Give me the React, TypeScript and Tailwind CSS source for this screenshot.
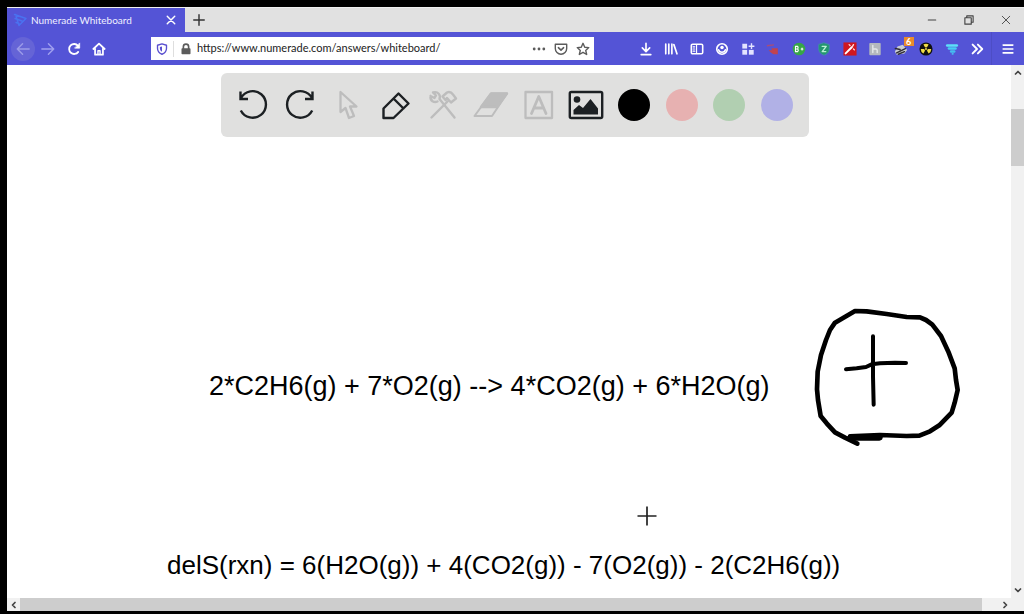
import React from 'react';

type IconProps = { children: React.ReactNode; className?: string; box?: string };

function Icon({ children, className = 'size-4', box = '0 0 16 16' }: IconProps) {
  return (
    <svg
      viewBox={box}
      className={className}
      fill="none"
      stroke="currentColor"
      strokeWidth="1.6"
      strokeLinecap="round"
      strokeLinejoin="round"
      aria-hidden="true"
    >
      {children}
    </svg>
  );
}

type ButtonProps = { label: string; className?: string; children: React.ReactNode };

function IconButton({ label, className = '', children }: ButtonProps) {
  return (
    <button type="button" aria-label={label} className={`flex items-center justify-center ${className}`}>
      {children}
    </button>
  );
}

function TabStrip() {
  return (
    <div className="flex h-[25px] shrink-0 border-t border-[#f0f0f0] bg-[#e1e1e1]">
      <div className="flex w-[178px] items-center bg-[#5454d6] pr-2 pl-1.5 text-[#f0f0ff]">
        <Icon className="size-4 text-[#4a72f0]">
          <path d="M1.5 2.5 L13 6.5 M2 6.5 L9 9 M3 10.5 L6 11.5 M2.5 2.5 L6 13.5 L13 6.5" strokeWidth="1.4" />
        </Icon>
        <span className="ml-0.5 flex-1 text-[10px]">Numerade Whiteboard</span>
        <IconButton label="Close tab" className="size-3 text-white">
          <Icon className="size-3">
            <path d="M3 3 L13 13 M13 3 L3 13" strokeWidth="1.9" />
          </Icon>
        </IconButton>
      </div>
      <IconButton label="New tab" className="w-[27px] text-[#333]">
        <Icon className="size-3">
          <path d="M8 1 V15 M1 8 H15" strokeWidth="1.9" />
        </Icon>
      </IconButton>
      <div className="ml-auto flex text-[#444]">
        <IconButton label="Minimize" className="w-[37px]">
          <Icon className="size-3"><path d="M3 8 H13" strokeWidth="1.4" /></Icon>
        </IconButton>
        <IconButton label="Restore" className="w-[37px]">
          <Icon className="size-3">
            <path d="M2.5 5 H11 V13.500 H2.500 Z M5 5 V2.500 H13.500 V11 H11" strokeWidth="1.5" />
          </Icon>
        </IconButton>
        <IconButton label="Close window" className="w-[37px]">
          <Icon className="size-3"><path d="M3 3 L13 13 M13 3 L3 13" strokeWidth="1.2" /></Icon>
        </IconButton>
      </div>
    </div>
  );
}

function AddressBar() {
  return (
    <div className="ml-10 flex h-[23px] w-[443px] items-center bg-white text-[#5b5b5b]">
      <IconButton label="Tracking protection" className="w-[22px] text-[#5a50cf]">
        <Icon className="size-3">
          <path d="M8 1.2 L14 3 V7 C14 11.2 11.5 13.6 8 15 C4.5 13.6 2 11.2 2 7 V3 Z" strokeWidth="1.8" />
          <path d="M8 4.5 V11.5 C6 10.5 5.2 9 5.2 7 V5.2 Z" fill="currentColor" stroke="none" />
        </Icon>
      </IconButton>
      <span className="h-4 w-px bg-[#dedede]" />
      <IconButton label="Site information" className="w-[23px]">
        <Icon className="size-3">
          <path d="M4.5 8 V5 A3.5 3.5 0 0 1 11.5 5 V8" strokeWidth="2.2" />
          <rect x="2" y="7" width="12" height="8" rx="1" fill="currentColor" stroke="none" />
        </Icon>
      </IconButton>
      <input
        type="text"
        aria-label="Address"
        defaultValue="https://www.numerade.com/answers/whiteboard/"
        className="min-w-0 flex-1 bg-transparent text-[11px] text-[#222] outline-none"
      />
      <IconButton label="Page actions" className="w-[23px]">
        <Icon className="size-3.5">
          <g fill="currentColor" stroke="none">
            <circle cx="2.5" cy="8" r="1.6" />
            <circle cx="8" cy="8" r="1.6" />
            <circle cx="13.5" cy="8" r="1.6" />
          </g>
        </Icon>
      </IconButton>
      <IconButton label="Save to Pocket" className="w-[22px]">
        <Icon className="size-3.5">
          <path d="M1.5 2.5 H14.5 V7.5 A6.5 6.5 0 0 1 1.5 7.5 Z" />
          <path d="M5 6.5 L8 9.3 L11 6.5" strokeWidth="1.8" />
        </Icon>
      </IconButton>
      <IconButton label="Bookmark" className="w-[22px]">
        <Icon className="size-3.5">
          <path d="M8 1.5 L10 6 L14.6 6.4 L11.1 9.6 L12.2 14.3 L8 11.8 L3.8 14.3 L4.9 9.6 L1.4 6.4 L6 6 Z" />
        </Icon>
      </IconButton>
    </div>
  );
}

const extensions: { label: string; icon: React.ReactNode }[] = [
  { label: 'Downloads', icon: <path d="M8 1.5 V10.5 M3.8 6.8 L8 11 L12.2 6.8 M2.5 14.5 H13.5" strokeWidth="1.9" /> },
  { label: 'Library', icon: <path d="M2 2.5 V13.5 M5.5 2.5 V13.5 M9 2.5 V13.5 M11.3 3 L14.8 13.5" strokeWidth="1.9" /> },
  {
    label: 'Sidebars',
    icon: (
      <>
        <rect x="1.5" y="2.5" width="13" height="11" rx="1.5" strokeWidth="1.8" />
        <path d="M7.5 3 V13 M3.5 5.5 H5.5 M3.5 8 H5.5 M3.5 10.5 H5.5" strokeWidth="1.3" />
      </>
    ),
  },
  {
    label: 'Account',
    icon: (
      <>
        <circle cx="8" cy="8" r="6" strokeWidth="1.9" />
        <circle cx="8" cy="6.3" r="2" fill="currentColor" stroke="none" />
        <path d="M4.2 9 C5 12.7 11 12.7 11.8 9" strokeWidth="1.8" />
      </>
    ),
  },
  {
    label: 'Add-ons',
    icon: (
      <g fill="#e4e4ff" stroke="none">
        <rect x="1.5" y="2" width="5.5" height="5.5" />
        <rect x="1.5" y="9" width="5.5" height="5.5" />
        <rect x="9" y="9" width="5.5" height="5.5" />
        <path d="M11.2 1.5 H12.8 V4 H15.3 V5.6 H12.8 V8 H11.2 V5.6 H8.7 V4 H11.2 Z" />
      </g>
    ),
  },
  {
    label: 'Recorder',
    icon: (
      <g stroke="none">
        <path d="M1 3.5 L9 2.5 V4 L1 5 Z" fill="#a84d78" />
        <path d="M6.5 7 H13.5 V14 H8.5 L5.5 12 L3 9.5 H6.5 Z" fill="#c0434f" />
      </g>
    ),
  },
  {
    label: 'Grade helper',
    icon: (
      <>
        <circle cx="8" cy="8" r="7.2" fill="#37a647" stroke="none" />
        <path d="M4 5 H6.5 Q7.5 6.500 6.5 8 H4 M6.5 8 Q8 9.5 6.5 11 H4 V5 M10.5 8 H12.5 M11.5 7 V9" stroke="#fff" strokeWidth="1.3" />
      </>
    ),
  },
  {
    label: 'Security',
    icon: (
      <>
        <path d="M8 1 L14 3 V8 C14 12 11 14 8 15 C5 14 2 12 2 8 V3 Z" fill="#23976e" stroke="#3f8fa5" strokeWidth="1" />
        <path d="M6 5 H10.5 L6 11 H10" stroke="#b9f1d4" />
      </>
    ),
  },
  {
    label: 'Magic wand',
    icon: (
      <>
        <rect x="0.5" y="0.5" width="15" height="15" fill="#cf1720" stroke="none" />
        <path d="M3 13 L10 6" stroke="#fff" strokeWidth="2.2" />
        <path d="M7 3 L8 4 M12 8 L13 9 M12 3 L10.5 5.5" stroke="#ffd9d9" />
      </>
    ),
  },
  {
    label: 'Honey',
    icon: (
      <>
        <rect x="1.5" y="1" width="13" height="14" rx="1" fill="#b4b9bd" stroke="none" />
        <path d="M5.5 4 V12 M5.5 8 H9 Q10.5 8 10.5 9.5 V12" stroke="#e6e9ea" />
      </>
    ),
  },
  {
    label: 'Notifications',
    icon: (
      <>
        <path d="M1 11 L4 5 L10 3 L15 9 L12 13 L3 14.5 Z" fill="#c9cdd2" stroke="none" />
        <path d="M1.5 7.5 L7 8.5 M3 12.5 L13 7.5 M5 14 L12 11" stroke="#302c36" />
      </>
    ),
  },
  {
    label: 'Radiation',
    icon: (
      <g stroke="none">
        <circle cx="8" cy="8" r="7.5" fill="#101010" />
        <path d="M8 8 L5 2.8 A6 6 0 0 1 11 2.8 Z M8 8 L14 8 A6 6 0 0 1 11 13.2 Z M8 8 L5 13.2 A6 6 0 0 1 2 8 Z" fill="#f1de47" />
        <circle cx="8" cy="8" r="2" fill="#101010" />
        <circle cx="8" cy="8" r="1.1" fill="#f1de47" />
      </g>
    ),
  },
  {
    label: 'Tornado',
    icon: (
      <g strokeWidth="2.9">
        <path d="M2.5 4 H13.5" stroke="#5ce0f8" />
        <path d="M4.5 7.5 H12" stroke="#46cdf4" />
        <path d="M7 10.800 H10.5" stroke="#45bdf0" />
        <path d="M8.5 13.500 H9" stroke="#45bdf0" strokeWidth="2" />
      </g>
    ),
  },
  { label: 'More tools', icon: <path d="M3 3 L8 8 L3 13 M9 3 L14 8 L9 13" strokeWidth="2.2" /> },
];

function NavBar() {
  return (
    <div className="flex h-[33px] shrink-0 items-center bg-[#5454d6] text-white">
      <div className="flex items-center pl-1">
        <IconButton label="Back" className="size-6 rounded-full bg-[#6564d6] text-[#9b9be8]">
          <Icon className="size-3.5"><path d="M15 8 H1.5 M7.5 2 L1.5 8 L7.5 14" strokeWidth="1.7" /></Icon>
        </IconButton>
        <IconButton label="Forward" className="size-[26px] text-[#a0a0ef]">
          <Icon className="size-3.5"><path d="M1 8 H14.5 M8.5 2 L14.5 8 L8.5 14" strokeWidth="1.7" /></Icon>
        </IconButton>
        <IconButton label="Reload" className="size-[26px]">
          <Icon className="size-3.5">
            <path d="M12.8 11.3 A5.7 5.7 0 1 1 12.5 4.3" strokeWidth="2.1" />
            <path d="M14.5 1.5 V7 H9 Z" fill="currentColor" strokeWidth="0.8" />
          </Icon>
        </IconButton>
        <IconButton label="Home" className="size-6">
          <Icon className="size-3.5">
            <path d="M1.5 8 L8 1.8 L14.5 8 M3.5 7.5 V14.5 H12.5 V7.5" strokeWidth="2" />
            <path d="M6.8 14 V10 H9.2 V14" strokeWidth="1.6" />
          </Icon>
        </IconButton>
      </div>
      <AddressBar />
      <div className="ml-auto grid w-[357px] grid-cols-14">
        {extensions.map(({ label, icon }) => (
          <IconButton key={label} label={label} className="relative h-6">
            <Icon className="size-3.5">{icon}</Icon>
            {label === 'Notifications' && (
              <span className="absolute top-0 right-0 flex h-[9px] w-2.5 items-center justify-center bg-[#e98a2b] text-[9px] leading-none font-bold text-white">
                6
              </span>
            )}
          </IconButton>
        ))}
      </div>
      <div className="ml-px flex h-full w-[33px] items-center justify-center border-l border-[#4d4dc5]">
        <IconButton label="Application menu" className="size-6">
          <Icon className="size-3.5"><path d="M2.5 3.5 H13.5 M2.5 8 H13.5 M2.5 12.5 H13.5" strokeWidth="1.9" /></Icon>
        </IconButton>
      </div>
    </div>
  );
}

const tools: { label: string; enabled: boolean; icon: React.ReactNode }[] = [
  {
    label: 'Undo',
    enabled: true,
    icon: <path d="M5.5 4.5 V12 H13 M6 11 A13.3 13.3 0 1 1 5.8 23.5" strokeLinecap="butt" strokeLinejoin="miter" />,
  },
  {
    label: 'Redo',
    enabled: true,
    icon: <path d="M30.5 4.5 V12 H23 M30 11 A13.3 13.3 0 1 0 30.2 23.5" strokeLinecap="butt" strokeLinejoin="miter" />,
  },
  { label: 'Select', enabled: false, icon: <path d="M10.5 5 V25 L15.5 21 L19 31 L24 29 L20 19.5 H26.5 Z" strokeWidth="2.3" /> },
  {
    label: 'Pen',
    enabled: true,
    icon: <path d="M5.5 31 V21.5 L20.5 6.5 L30.5 16.5 L15.5 31 Z M15.5 11.5 L25.5 21.5" strokeWidth="2.4" />,
  },
  {
    label: 'Tools',
    enabled: false,
    icon: (
      <>
        <path d="M8 5.5 C13 4 16 8 14.5 12 L29.5 30.5 M5.5 9 C5 14 9 16 12.5 14.5 M5.5 9 L9.5 11 L11 8.5 L8 5.5" />
        <path d="M6.5 30.5 L22.5 14.5 M17.5 9.5 L22 5.5 Q25.5 4 28 7.5 L31 11.5 L26 15.5 L22 11 L20.5 13 Z" />
      </>
    ),
  },
  {
    label: 'Eraser',
    enabled: false,
    icon: (
      <>
        <path d="M1.5 29 L18 6.5 H34 L19 29 Z" strokeWidth="2" />
        <path d="M8 20 L18 6.5 H34 L24 20 Z" fill="currentColor" />
      </>
    ),
  },
  {
    label: 'Text',
    enabled: false,
    icon: (
      <>
        <rect x="4.5" y="5" width="26.5" height="26" strokeWidth="2.3" />
        <path d="M10.5 26.5 L17.75 9.5 L25 26.5 M13 21 H22.5" strokeWidth="2.8" />
      </>
    ),
  },
  {
    label: 'Image',
    enabled: true,
    icon: (
      <>
        <rect x="1.8" y="5" width="32.4" height="26" rx="1.5" strokeWidth="2.4" />
        <circle cx="9" cy="12.5" r="3.3" fill="currentColor" stroke="none" />
        <path d="M5.5 27.5 V23 L11 18 L15 21 L22.5 12 L30 21.5 V27.5 Z" fill="currentColor" stroke="none" />
      </>
    ),
  },
];

const inks = [
  { label: 'Black', color: 'bg-black' },
  { label: 'Red', color: 'bg-[#e7b1b1]' },
  { label: 'Green', color: 'bg-[#b1cfb1]' },
  { label: 'Blue', color: 'bg-[#b1b1e6]' },
];

function WhiteboardToolbar() {
  return (
    <div
      role="toolbar"
      aria-label="Whiteboard tools"
      className="grid h-16 w-[588px] grid-cols-12 items-center rounded-md bg-[#e0e0df] px-2"
    >
      {tools.map(({ label, enabled, icon }) => (
        <IconButton key={label} label={label} className={enabled ? 'h-12 text-[#1c2023]' : 'h-12 text-[#bdbdbd]'}>
          <svg
            viewBox="0 0 36 36"
            className="size-9"
            fill="none"
            stroke="currentColor"
            strokeWidth="2.4"
            strokeLinecap="round"
            strokeLinejoin="round"
            aria-hidden="true"
          >
            {icon}
          </svg>
        </IconButton>
      ))}
      {inks.map(({ label, color }) => (
        <IconButton key={label} label={`${label} ink`} className="h-12">
          <span className={`size-8 rounded-full ${color}`} />
        </IconButton>
      ))}
    </div>
  );
}

function Whiteboard() {
  return (
    <main className="relative min-w-0 flex-1 overflow-hidden bg-white font-['Liberation_Sans',sans-serif] text-black">
      <div className="flex justify-center pt-2 pl-3">
        <WhiteboardToolbar />
      </div>
      <p className="absolute top-[303px] left-[202px] text-[27px] leading-9 whitespace-nowrap">
        2*C2H6(g) + 7*O2(g) --&gt; 4*CO2(g) + 6*H2O(g)
      </p>
      <svg
        viewBox="0 0 510 450"
        className="absolute top-[235px] left-[793px] h-[150px] w-[170px]"
        fill="none"
        stroke="black"
        strokeWidth="14"
        strokeLinecap="round"
        strokeLinejoin="round"
        role="img"
        aria-label="Circled plus sign"
      >
        <path d="M172 431 L135 413 L105 397 L80 370 L62 348 L54 300 L51 268 L53 215 L63 165 L78 120 L90 90 L105 68 L165 33 L200 34 L260 42 L320 51 L360 52 L378 60 L397 74 L423 108 L445 155 L464 205 L468 240 L473 270 L464 308 L455 338 L418 376 L390 394 L358 407 L320 408 L240 405 L150 409" />
        <path d="M155 412 H238" strokeWidth="20" />
        <path d="M219 109 V230 L221 314 M138 208 L170 205 L198 201 L215 193 L240 190 L285 188 L318 189" strokeWidth="12" />
      </svg>
      <svg
        viewBox="0 0 20 20"
        className="absolute top-[441px] left-[630px] size-5"
        stroke="#222"
        strokeWidth="1.7"
        aria-hidden="true"
      >
        <path d="M10 0.5 V19.5 M0.5 10 H19.5" />
      </svg>
      <p className="absolute top-[482px] left-[160px] text-[26px] leading-9 whitespace-nowrap">
        delS(rxn) = 6(H2O(g)) + 4(CO2(g)) - 7(O2(g)) - 2(C2H6(g))
      </p>
    </main>
  );
}

function VerticalScrollbar() {
  return (
    <div className="flex w-[13px] shrink-0 flex-col bg-[#f1f1f1] text-[#444]">
      <IconButton label="Scroll up" className="h-4">
        <Icon className="size-2"><path d="M3 10 L8 5 L13 10" strokeWidth="3.5" /></Icon>
      </IconButton>
      <div className="mt-7 h-[57px] bg-[#cdcdcd]" />
      <IconButton label="Scroll down" className="mt-auto h-4">
        <Icon className="size-2"><path d="M3 6 L8 11 L13 6" strokeWidth="3.5" /></Icon>
      </IconButton>
    </div>
  );
}

function HorizontalScrollbar() {
  return (
    <div className="flex h-[13px] shrink-0 bg-[#f1f1f1] text-[#444]">
      <IconButton label="Scroll left" className="w-[13px]">
        <Icon className="size-2"><path d="M10 3 L5 8 L10 13" strokeWidth="3.5" /></Icon>
      </IconButton>
      <div className="flex flex-1 pr-4">
        <div className="flex-1 bg-[#cdcdcd]" />
      </div>
      <IconButton label="Scroll right" className="w-[13px]">
        <Icon className="size-2"><path d="M6 3 L11 8 L6 13" strokeWidth="3.5" /></Icon>
      </IconButton>
      <div className="w-[13px]" />
    </div>
  );
}

export default function App() {
  return (
    <div className="flex h-screen flex-col overflow-hidden bg-black pt-[7px] pb-[3px] pl-[7px] font-['Lato','Open_Sans',sans-serif]">
      <TabStrip />
      <NavBar />
      <div className="flex min-h-0 flex-1">
        <Whiteboard />
        <VerticalScrollbar />
      </div>
      <HorizontalScrollbar />
    </div>
  );
}
